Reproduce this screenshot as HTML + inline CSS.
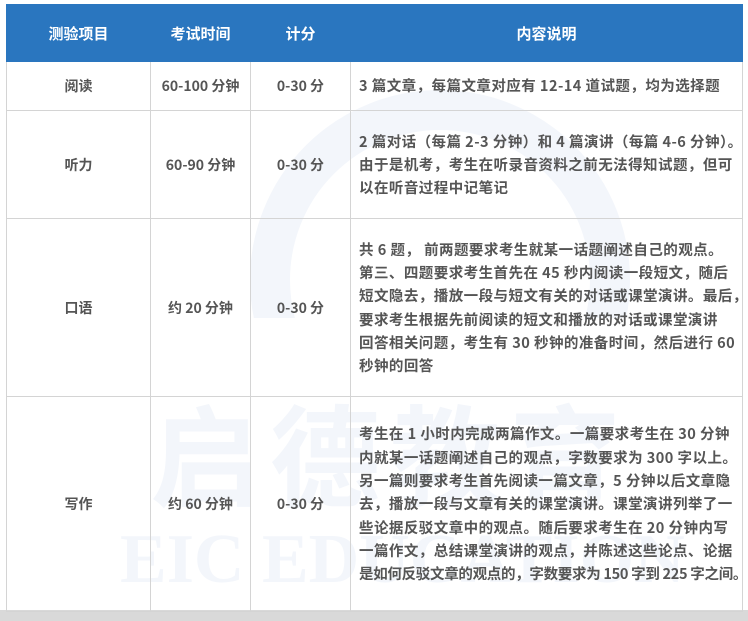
<!DOCTYPE html>
<html><head><meta charset="utf-8"><style>
body{margin:0;width:748px;height:621px;background:#fff;position:relative;overflow:hidden;font-family:"Noto Sans CJK SC","Liberation Sans",sans-serif;}
table{position:absolute;left:6px;top:4px;border-collapse:collapse;table-layout:fixed;width:737px;z-index:1}
td,th{border:1px solid #d4d4d4;font-size:14px;color:#555;font-weight:bold;text-align:center;padding:0;}
th{background:#2a76bf;color:#fff;font-size:15px;height:56px;border-color:#2a76bf;}
td.d{text-align:left;padding:0 0 0 8px;line-height:23.3px;font-size:14.5px;letter-spacing:0.45px;white-space:nowrap;overflow:hidden;}
.t{letter-spacing:-0.3px}
.bar{position:absolute;left:0;top:610px;width:748px;height:11px;background:#d9d9d9}
.wm{position:absolute;left:150px;top:370px;font-size:110px;color:#f3f6fb;font-weight:bold;letter-spacing:10px;font-family:"Noto Sans CJK SC",sans-serif;z-index:0}
.wm2{position:absolute;left:120px;top:520px;font-size:70px;color:#f3f6fb;font-weight:bold;font-family:"Liberation Serif",serif;z-index:0}
.shape{position:absolute;left:250px;top:90px;width:300px;height:300px;border:40px solid #f3f6fb;border-radius:50%;z-index:0;clip-path:polygon(0 0,100% 0,100% 60%,0 60%)}
</style></head><body>
<div class="shape"></div>
<div class="wm">启德教育</div>
<div class="wm2">EIC EDUCATION</div>
<table>
<colgroup><col style="width:144px"><col style="width:100px"><col style="width:100px"><col></colgroup>
<tr><th>测验项目</th><th>考试时间</th><th>计分</th><th>内容说明</th></tr>
<tr style="height:49px"><td>阅读</td><td>60-100 分钟</td><td>0-30 分</td><td class="d">3 篇文章，每篇文章对应有 12-14 道试题，均为选择题</td></tr>
<tr style="height:108px"><td>听力</td><td>60-90 分钟</td><td>0-30 分</td><td class="d">2 篇对话（每篇 2-3 分钟）和 4 篇演讲（每篇 4-6 分钟）。<br>由于是机考，考生在听录音资料之前无法得知试题，但可<br>以在听音过程中记笔记</td></tr>
<tr style="height:178px"><td>口语</td><td>约 20 分钟</td><td>0-30 分</td><td class="d">共 6 题， 前两题要求考生就某一话题阐述自己的观点。<br>第三、四题要求考生首先在 45 秒内阅读一段短文，随后<br>短文隐去，播放一段与短文有关的对话或课堂演讲。最后，<br>要求考生根据先前阅读的短文和播放的对话或课堂演讲<br>回答相关问题，考生有 30 秒钟的准备时间，然后进行 60<br>秒钟的回答</td></tr>
<tr style="height:215px"><td>写作</td><td>约 60 分钟</td><td>0-30 分</td><td class="d">考生在 1 小时内完成两篇作文。一篇要求考生在 30 分钟<br>内就某一话题阐述自己的观点，字数要求为 300 字以上。<br>另一篇则要求考生首先阅读一篇文章，5 分钟以后文章隐<br>去，播放一段与文章有关的课堂演讲。课堂演讲列举了一<br>些论据反驳文章中的观点。随后要求考生在 20 分钟内写<br>一篇作文，总结课堂演讲的观点，并陈述这些论点、论据<br><span class="t">是如何反驳文章的观点的，字数要求为 150 字到 225 字之间。</span></td></tr>
</table>
<div class="bar"></div>
</body></html>
